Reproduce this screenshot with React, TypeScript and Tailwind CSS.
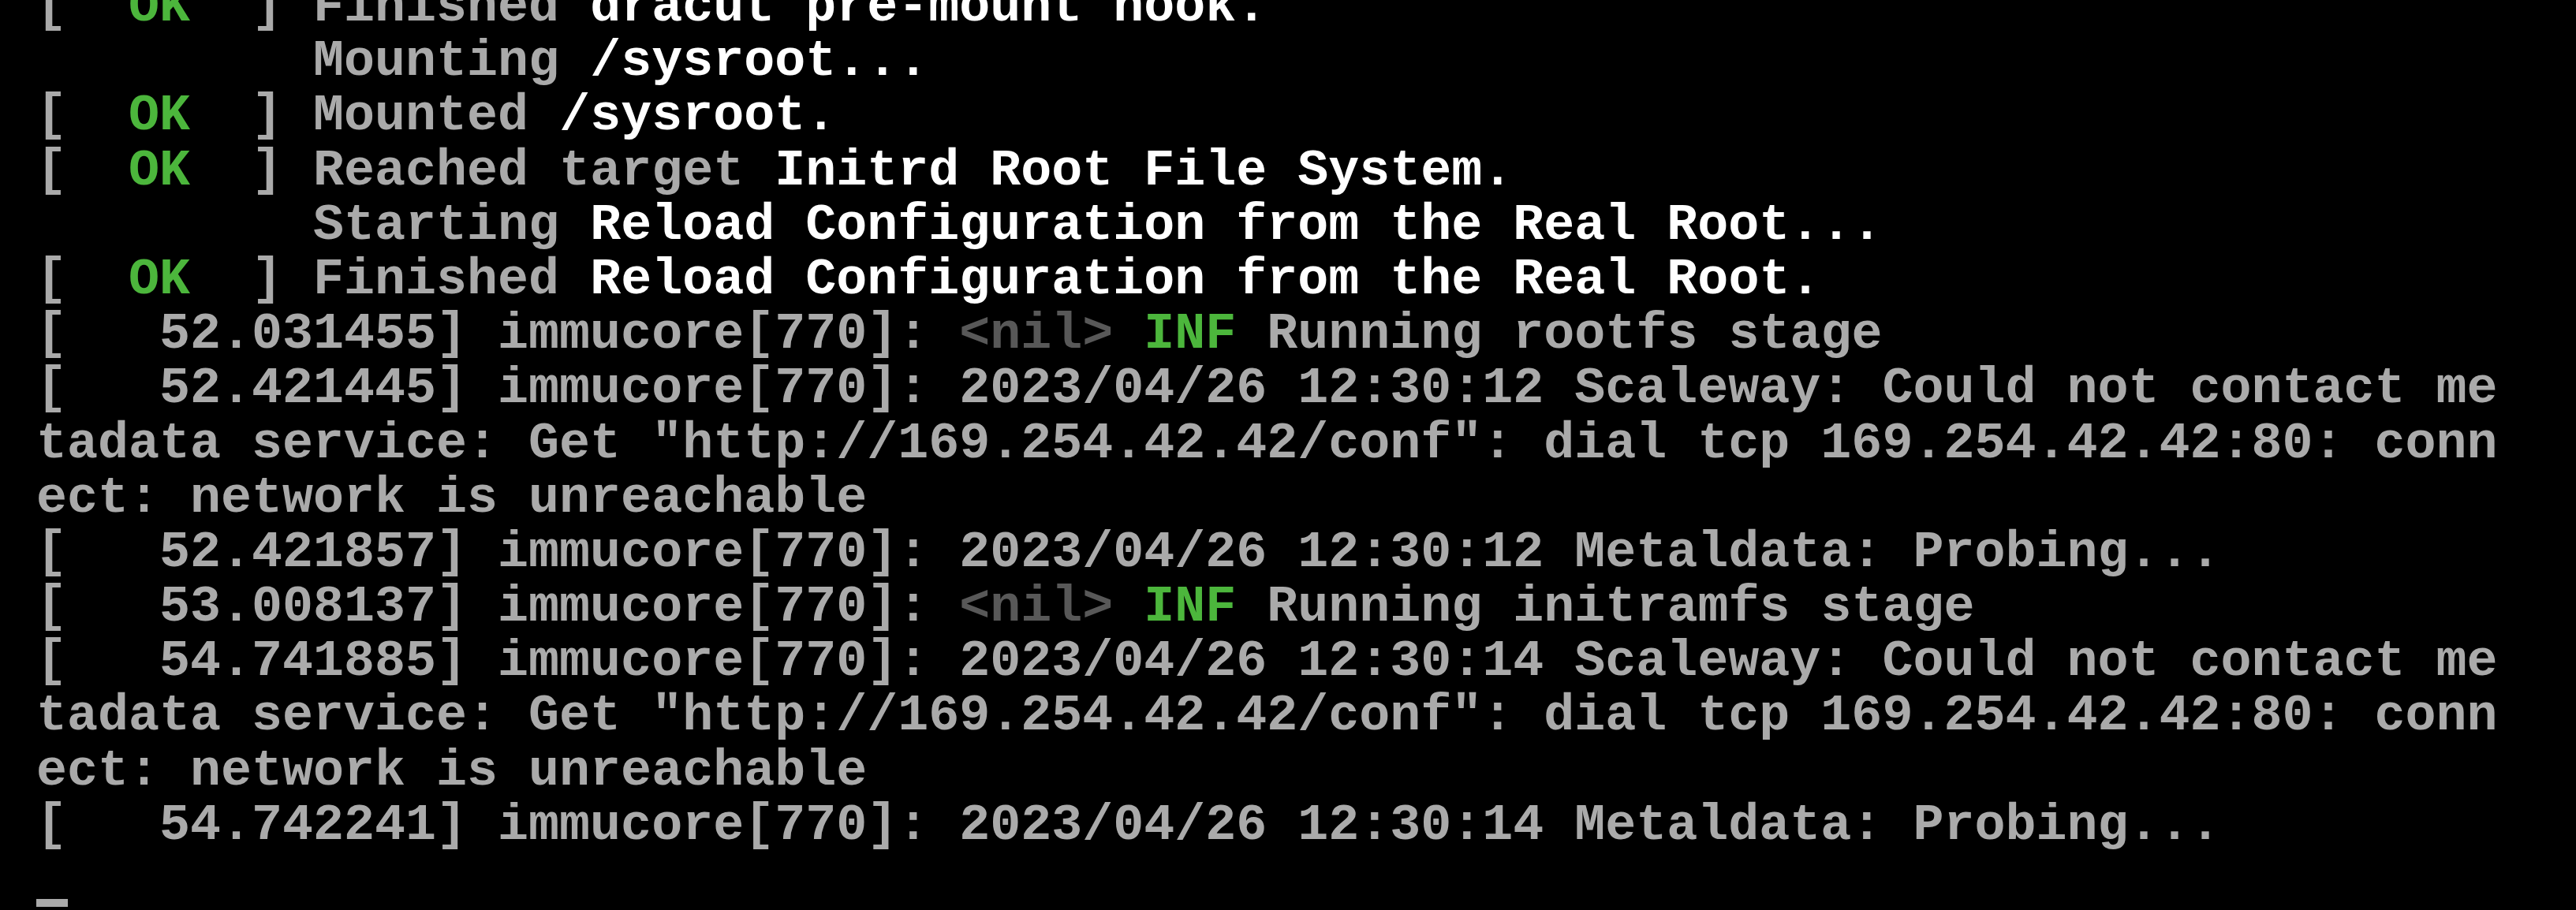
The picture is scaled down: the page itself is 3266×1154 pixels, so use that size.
import React from "react";

type Seg = [string, string];

const G = "text-[#aaaaaa]";
const W = "text-white";
const OK = "text-[#4cb63c]";
const D = "text-[#585858]";

const okLine = (verb: string, rest: string): Seg[] => [
  ["[  ", G],
  ["OK", OK],
  [`  ] ${verb} `, G],
  [rest, W],
];

const lines: Seg[][] = [
  okLine("Finished", "dracut pre-mount hook."),
  [["         Mounting ", G], ["/sysroot...", W]],
  okLine("Mounted", "/sysroot."),
  okLine("Reached target", "Initrd Root File System."),
  [["         Starting ", G], ["Reload Configuration from the Real Root...", W]],
  okLine("Finished", "Reload Configuration from the Real Root."),
  [
    ["[   52.031455] immucore[770]: ", G],
    ["<nil>", D],
    [" ", G],
    ["INF", OK],
    [" Running rootfs stage", G],
  ],
  [["[   52.421445] immucore[770]: 2023/04/26 12:30:12 Scaleway: Could not contact me", G]],
  [["tadata service: Get \"http://169.254.42.42/conf\": dial tcp 169.254.42.42:80: conn", G]],
  [["ect: network is unreachable", G]],
  [["[   52.421857] immucore[770]: 2023/04/26 12:30:12 Metaldata: Probing...", G]],
  [
    ["[   53.008137] immucore[770]: ", G],
    ["<nil>", D],
    [" ", G],
    ["INF", OK],
    [" Running initramfs stage", G],
  ],
  [["[   54.741885] immucore[770]: 2023/04/26 12:30:14 Scaleway: Could not contact me", G]],
  [["tadata service: Get \"http://169.254.42.42/conf\": dial tcp 169.254.42.42:80: conn", G]],
  [["ect: network is unreachable", G]],
  [["[   54.742241] immucore[770]: 2023/04/26 12:30:14 Metaldata: Probing...", G]],
];

const Console = () => {
  return (
    <div className="h-[1154px] w-full overflow-hidden bg-black">
      <div className="-mt-[25px] pl-[46px] font-['Liberation_Mono',monospace] text-[65px] font-bold leading-[69.2px]">
        {lines.map((segs, i) => (
          <div className="h-[69.2px] whitespace-pre" key={i}>
            {segs.map(([text, color], j) => (
              <span className={color} key={j}>
                {text}
              </span>
            ))}
          </div>
        ))}
        {/* blinking cursor */}
        <div className="flex h-[69.2px] items-end pb-[1px]">
          <div className="h-[10px] w-[40px] bg-[#aaaaaa]" />
        </div>
      </div>
    </div>
  );
};

export default function App() {
  return <Console />;
}
